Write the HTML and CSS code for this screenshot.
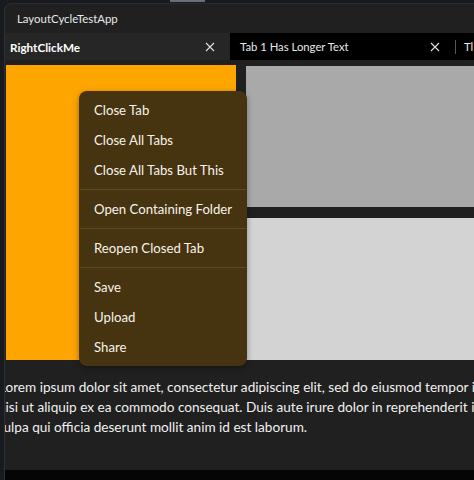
FILE: index.html
```html
<!DOCTYPE html>
<html>
<head>
<meta charset="utf-8">
<link rel="stylesheet" href="styles.css">
</head>
<body>
<div class="topband"><span class="topmark"></span></div>
<div class="window">
  <div class="titlebar">LayoutCycleTestApp</div>
  <div class="tabstrip">
    <div class="tab selected">
      <span class="tab-label">RightClickMe</span>
      <svg class="close" width="10" height="10" viewBox="0 0 10 10"><path d="M1 1 L9 9 M9 1 L1 9" stroke="#e0e0e0" stroke-width="1.1" fill="none"/></svg>
    </div>
    <div class="tab">
      <span class="tab-label">Tab 1 Has Longer Text</span>
      <svg class="close" width="10" height="10" viewBox="0 0 10 10"><path d="M1 1 L9 9 M9 1 L1 9" stroke="#e0e0e0" stroke-width="1.1" fill="none"/></svg>
    </div>
    <div class="tab-sep"></div>
    <div class="tab last"><span class="tab-label">Tl</span></div>
  </div>
  <div class="content">
    <div class="panel orange"></div>
    <div class="panel gray"></div>
    <div class="panel light"></div>
  </div>
  <div class="textarea">
    <div class="lines">
      <div class="line">Lorem ipsum dolor sit amet, consectetur adipiscing elit, sed do eiusmod tempor incididunt ut labore et dolore magna aliqua.</div>
      <div class="line l2">nisi ut aliquip ex ea commodo consequat. Duis aute irure dolor in reprehenderit in voluptate velit esse cillum dolore.</div>
      <div class="line l3">culpa qui officia deserunt mollit anim id est laborum.</div>
    </div>
  </div>
  <div class="bottomband"></div>
</div>
<div class="menu">
  <div class="item">Close Tab</div>
  <div class="item">Close All Tabs</div>
  <div class="item">Close All Tabs But This</div>
  <div class="sep"></div>
  <div class="item">Open Containing Folder</div>
  <div class="sep"></div>
  <div class="item">Reopen Closed Tab</div>
  <div class="sep"></div>
  <div class="item">Save</div>
  <div class="item">Upload</div>
  <div class="item">Share</div>
</div>
</body>
</html>
```
FILE: styles.css
```css
html, body {
  margin: 0;
  padding: 0;
  width: 474px;
  height: 480px;
  overflow: hidden;
  background: #171a1f;
  font-family: "Lato", "Noto Sans", sans-serif;
  color: #f2f2f2;
}
.topband {
  height: 3px;
  position: relative;
}
.topmark {
  position: absolute;
  left: 170px;
  top: 0;
  width: 35px;
  height: 2px;
  background: #6a6e74;
}
.window {
  margin-left: 4px;
  height: 477px;
  background: #202020;
  border-top-left-radius: 8px;
  border-left: 1px solid #2f3033;
  border-top: 1px solid #2a2b2e;
  overflow: hidden;
  box-sizing: border-box;
}
.titlebar {
  height: 29px;
  line-height: 30px;
  padding-left: 12px;
  font-size: 11.4px;
  color: #e8e8e8;
}
.tabstrip {
  height: 27px;
  background: #000;
  display: flex;
  align-items: center;
  font-size: 11.3px;
}
.tab {
  width: 225px;
  height: 27px;
  display: flex;
  align-items: center;
  justify-content: space-between;
  padding: 0 15px 0 10px;
  box-sizing: border-box;
  flex: none;
  color: #e8e8e8;
}
.tab.selected {
  background: #262626;
  padding-left: 5px;
  width: 225px;
  font-weight: bold;
  font-size: 11.7px;
  color: #fff;
}
.tab.last {
  width: auto;
  padding-left: 8px;
}
.tab-sep {
  width: 1px;
  height: 14px;
  background: #555;
  flex: none;
}
.close {
  display: block;
  flex: none;
}
.content {
  padding-top: 5px;
  padding-left: 1px;
  display: grid;
  grid-template-columns: 230px 240px;
  grid-template-rows: 142px 153px;
  column-gap: 10px;
  height: 295px;
}
.panel.orange {
  background: #ffa500;
  grid-row: 1 / 3;
}
.panel.gray {
  background: #a9a9a9;
  margin-top: 1px;
}
.panel.light {
  background: #d3d3d3;
  margin-top: 11px;
}
.textarea {
  height: 110px;
  padding-top: 17px;
  box-sizing: border-box;
  overflow: hidden;
  padding-left: 1px;
}
.lines {
  margin-left: -7px;
  font-size: 13.6px;
  line-height: 20px;
  color: #f0f0f0;
}
.line {
  white-space: nowrap;
}
.l2 { margin-left: -1px; }
.l3 { margin-left: -2px; }
.bottomband {
  height: 20px;
  background: #050505;
}
.menu {
  position: absolute;
  left: 79px;
  top: 91px;
  width: 168px;
  padding: 4px 0;
  background: #46330f;
  border-radius: 8px;
  box-sizing: border-box;
  box-shadow: 0 2px 6px rgba(0,0,0,0.35);
  font-size: 13.2px;
  color: #f7f3ec;
}
.item {
  height: 30px;
  line-height: 30px;
  padding-left: 15px;
  white-space: nowrap;
}
.sep {
  height: 1px;
  margin: 4px 1px;
  background: #5c4826;
}
```
